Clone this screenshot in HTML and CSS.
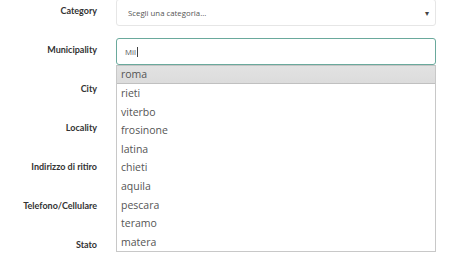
FILE: index.html
```html
<!DOCTYPE html>
<html>
<head>
<meta charset="utf-8">
<link rel="stylesheet" href="styles.css">
</head>
<body>
<form class="form">
  <div class="row first">
    <label class="lbl">Category</label>
    <div class="field">
      <div class="select">
        <span class="placeholder">Scegli una categoria...</span>
        <span class="arrow">▾</span>
      </div>
    </div>
  </div>
  <div class="row">
    <label class="lbl">Municipality</label>
    <div class="field">
      <div class="input focus"><span class="val">Mil</span><span class="caret"></span></div>
      <ul class="menu">
        <li class="active">roma</li>
        <li>rieti</li>
        <li>viterbo</li>
        <li>frosinone</li>
        <li>latina</li>
        <li>chieti</li>
        <li>aquila</li>
        <li>pescara</li>
        <li>teramo</li>
        <li>matera</li>
      </ul>
    </div>
  </div>
  <div class="row">
    <label class="lbl">City</label>
    <div class="field"><div class="input"></div></div>
  </div>
  <div class="row">
    <label class="lbl">Locality</label>
    <div class="field"><div class="input"></div></div>
  </div>
  <div class="row">
    <label class="lbl">Indirizzo di ritiro</label>
    <div class="field"><div class="input"></div></div>
  </div>
  <div class="row">
    <label class="lbl">Telefono/Cellulare</label>
    <div class="field"><div class="input"></div></div>
  </div>
  <div class="row">
    <label class="lbl">Stato</label>
    <div class="field"><div class="input"></div></div>
  </div>
</form>
</body>
</html>
```
FILE: styles.css
```css
html, body {
  margin: 0;
  padding: 0;
  background: #fff;
  overflow: hidden;
}
.form {
  display: flex;
  flex-direction: column;
  gap: 12px;
  width: 474px;
}
.row {
  display: grid;
  grid-template-columns: 97px 320px;
  column-gap: 19px;
  height: 27px;
}
.row.first {
  margin-top: -1px;
}
.lbl {
  font-family: Lato, "Liberation Sans", sans-serif;
  font-weight: 700;
  font-size: 9px;
  color: #333;
  text-align: right;
  padding-top: 6px;
  line-height: 11px;
}
.field {
  position: relative;
}
.select, .input {
  box-sizing: border-box;
  height: 27px;
  border: 1px solid #e6e6e6;
  border-radius: 3px;
  display: flex;
  align-items: center;
  font-family: "Open Sans", sans-serif;
  color: #555;
}
.select {
  justify-content: space-between;
  padding: 0 6px 0 11px;
}
.placeholder {
  font-size: 7.8px;
  color: #555;
}
.arrow {
  font-size: 8px;
  color: #444;
}
.input {
  border-color: transparent;
}
.input.focus {
  border: 1px solid #6aa99c;
  padding-left: 8px;
}
.val {
  font-size: 7.8px;
  color: #555;
}
.caret {
  display: inline-block;
  width: 1px;
  height: 10px;
  background: #444;
  margin-left: 1px;
}
.menu {
  position: absolute;
  left: 0;
  top: 27px;
  width: 320px;
  box-sizing: border-box;
  margin: 0;
  padding: 0;
  list-style: none;
  border: 1px solid #c8c8c8;
  border-top: none;
  background: #fff;
  font-family: "Open Sans", sans-serif;
  font-size: 10.5px;
  color: #555;
}
.menu li {
  height: 18.6px;
  line-height: 18.6px;
  padding-left: 4px;
}
.menu li.active {
  background: linear-gradient(#e2e2e2, #dcdcdc);
  border-top: 1px solid #c4c4c4;
  border-bottom: 1px solid #c0c0c0;
  height: 17px;
  line-height: 17px;
}
```
